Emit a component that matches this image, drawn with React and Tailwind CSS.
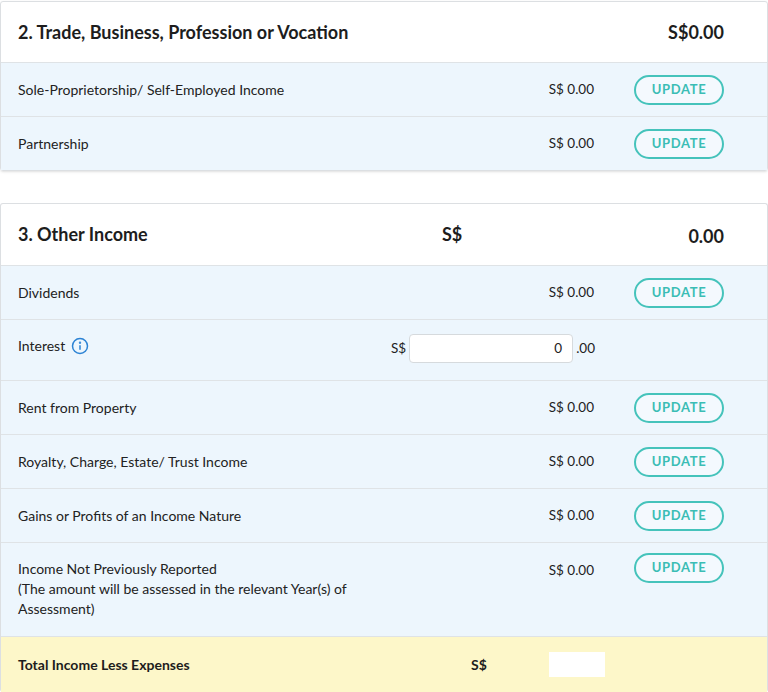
import React from "react";

const font = { fontFamily: "Lato, 'Liberation Sans', sans-serif" };

function UpdateButton() {
  return (
    <button className="w-[90px] h-[30px] rounded-full border-2 border-[#45c3bb] text-[#3bbdb5] text-[13px] font-bold tracking-wider bg-white/40">
      UPDATE
    </button>
  );
}

function Row({ label, tall }) {
  return (
    <div className={`flex bg-[#edf6fd] border-t border-[#dfe3e6] pl-[17px] pr-[43px] ${tall ? "items-start pt-[16px] pb-[17px]" : "h-[54px] items-center"}`}>
      <div className="flex-1 text-[14px] text-[#222] leading-[20px] pr-4">{label}</div>
      <div className={`w-[80px] text-right text-[13.5px] text-[#222] ${tall ? "pt-[1px]" : ""}`}>S$ 0.00</div>
      <div className={`ml-[40px] ${tall ? "-mt-[6px]" : ""}`}>
        <UpdateButton />
      </div>
    </div>
  );
}

export default function App() {
  return (
    <div className="w-[768px] h-[692px] bg-white overflow-hidden pt-px" style={font}>
      {/* SECTION 2 */}
      <div className="border border-[#dcdfe2] rounded-[3px] shadow-sm">
        <div className="h-[60px] flex items-center justify-between pl-[17px] pr-[43px]">
          <span className="text-[18px] font-bold text-[#1d1d1d]">2. Trade, Business, Profession or Vocation</span>
          <span className="text-[18px] font-bold text-[#1d1d1d]">S$0.00</span>
        </div>
        <Row label="Sole-Proprietorship/ Self-Employed Income" />
        <Row label="Partnership" />
      </div>

      {/* SECTION 3 */}
      <div className="mt-[32px] border border-[#dcdfe2] rounded-[3px] border-b-0">
        <div className="h-[61px] flex items-center pl-[17px] pr-[43px]">
          <span className="w-[424px] text-[18px] font-bold text-[#1d1d1d]">3. Other Income</span>
          <span className="text-[18px] font-bold text-[#1d1d1d]">S$</span>
          <span className="flex-1 text-right text-[18px] font-bold text-[#1d1d1d] pt-1">0.00</span>
        </div>
        <Row label="Dividends" />

        {/* Interest */}
        <div className="h-[61px] flex items-start bg-[#edf6fd] border-t border-[#dfe3e6] pl-[17px]">
          <div className="w-[373px] pt-[15px] flex items-center gap-[6px] text-[14px] text-[#222]">
            Interest
            <svg width="18" height="18" viewBox="0 0 24 24" fill="none" stroke="#2c83d4" strokeWidth="2">
              <circle cx="12" cy="12" r="10" />
              <line x1="12" y1="11" x2="12" y2="17" />
              <circle cx="12" cy="7.5" r="0.6" fill="#2c83d4" />
            </svg>
          </div>
          <div className="pt-[14px] flex items-center text-[13.5px] text-[#222]">
            <span className="mr-[3px]">S$</span>
            <div className="w-[164px] h-[29px] bg-white border border-[#d6dadd] rounded-[4px] flex items-center justify-end pr-[10px]">0</div>
            <span className="ml-[3px]">.00</span>
          </div>
        </div>

        <Row label="Rent from Property" />
        <Row label="Royalty, Charge, Estate/ Trust Income" />
        <Row label="Gains or Profits of an Income Nature" />
        <Row
          tall
          label={
            <>
              Income Not Previously Reported
              <br />
              (The amount will be assessed in the relevant Year(s) of
              <br />
              Assessment)
            </>
          }
        />

        {/* TOTAL */}
        <div className="h-[56px] flex items-center bg-[#fdf7c9] border-t border-[#dfe3e6] pl-[17px]">
          <span className="w-[453px] text-[14px] font-bold text-[#1d1d1d]">Total Income Less Expenses</span>
          <span className="w-[78px] text-[14px] font-bold text-[#1d1d1d]">S$</span>
          <div className="w-[56px] h-[25px] bg-white" />
        </div>
      </div>
    </div>
  );
}
